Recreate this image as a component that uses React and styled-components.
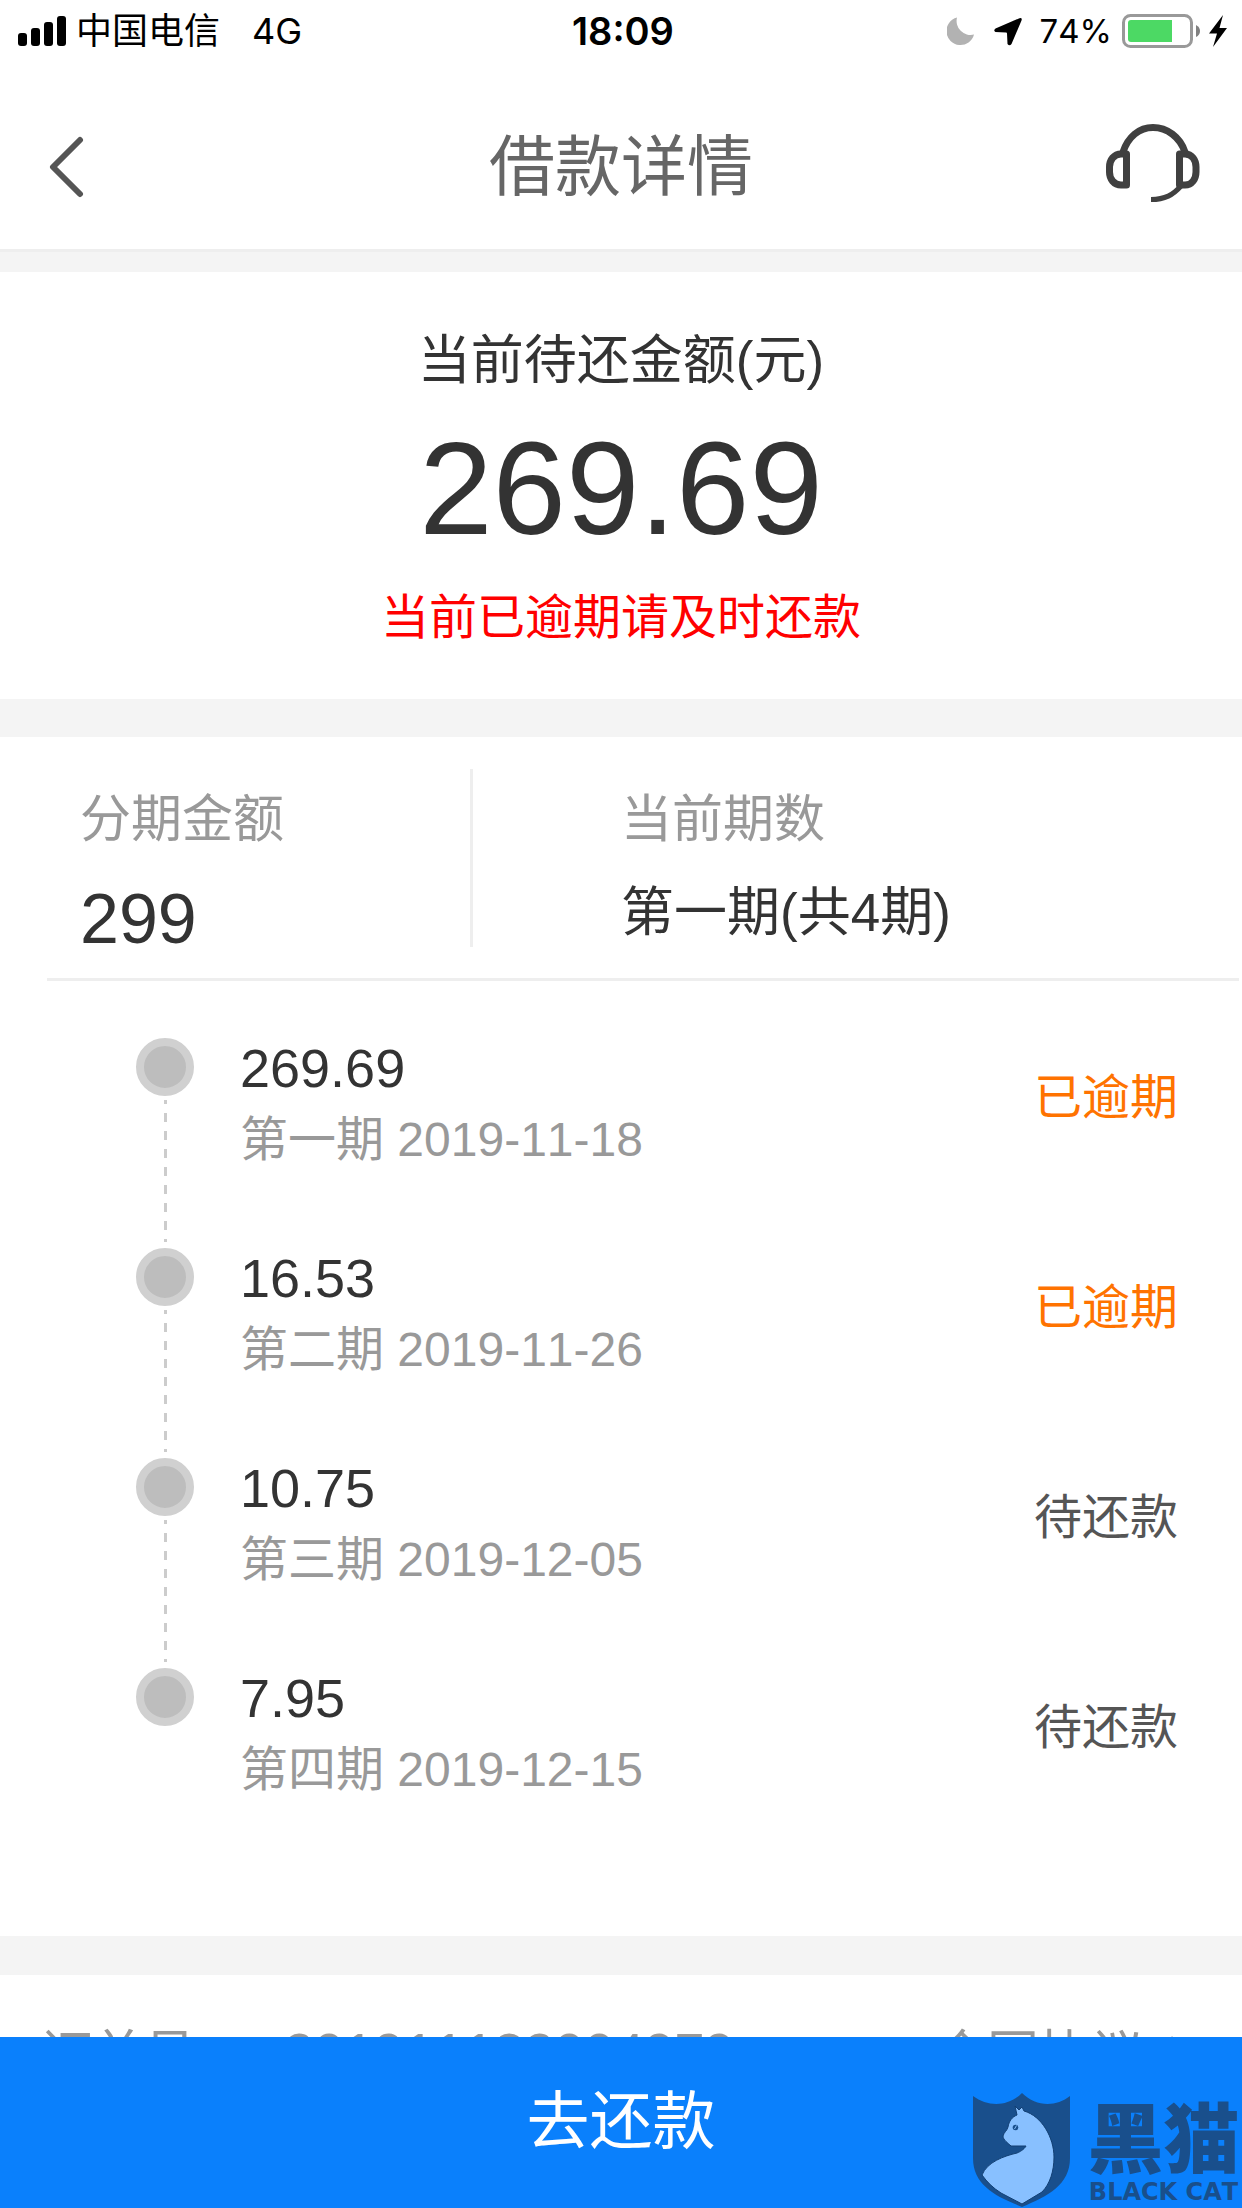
import React from 'react';
import styled, { createGlobalStyle } from 'styled-components';


const GlobalStyle = createGlobalStyle`
    * {
        box-sizing: border-box;
    }
    body {
        margin: 0;
        background-color: white;
        font-family: "Liberation Sans", "Noto Sans CJK SC", sans-serif;
        font-kerning: none;
        color: #333;
    }
    h1, p, dl, dt, dd, ul {
        margin: 0;
        padding: 0;
        font-weight: 400;
    }
`;
const Screen = styled.div`
    height: 100vh;
    display: flex;
    flex-direction: column;
`;

const StatusBar = styled.div`
    display: grid;
    grid-template-columns: 1fr auto 1fr;
    align-items: center;
    height: 60px;
    padding: 2px 14px 0 18px;
    font-family: Inter, "Noto Sans CJK SC", sans-serif;
    font-size: 36px;
    line-height: 48px;
    color: black;
    flex-shrink: 0;
`;
const StatusSide = styled.div`
    display: flex;
    align-items: center;
    gap: 10px;
    justify-content: ${props => props.$end ? 'flex-end' : 'flex-start'};
`;
const Network = styled.span`
    margin-left: 22px;
`;
const Time = styled.span`
    font-size: 38px;
    font-weight: 600;
`;
const Level = styled.span`
    margin-left: 8px;
    font-size: 33px;
`;

const Header = styled.header`
    display: flex;
    align-items: center;
    justify-content: space-between;
    height: 192px;
    padding: 24px 42px 0;
    border-bottom: 3px solid #eee;
    flex-shrink: 0;
`;
const IconButton = styled.button`
    display: flex;
    justify-content: ${props => props.$end ? 'flex-end' : 'flex-start'};
    width: 96px;
    padding: 0 0 0 ${props => props.$end ? 0 : 6}px;
    border: none;
    background: none;
    cursor: pointer;
`;
const Title = styled.h1`
    font-size: 66px;
    line-height: 84px;
    color: #666;
`;

const Content = styled.main`
    flex: 1;
    min-height: 0;
    overflow-y: auto;
    scrollbar-width: none;
`;
const Gap = styled.div`
    height: ${props => props.$size}px;
    background-color: #f4f4f4;
`;

const Amount = styled.section`
    display: flex;
    flex-direction: column;
    align-items: center;
    padding: 53px 0 51px;
`;
const AmountLabel = styled.p`
    font-size: 53px;
    line-height: 72px;
`;
const AmountValue = styled.p`
    font-size: 132px;
    line-height: 132px;
    margin: 26px 0 33px;
`;
const Warning = styled.p`
    font-size: 48px;
    line-height: 60px;
    color: #ff0000;
`;

const Summary = styled.dl`
    display: grid;
    grid-template-columns: 423px 3px 1fr;
    margin: 0 3px 0 47px;
    border-bottom: 3px solid #eee;
`;
const Cell = styled.div`
    padding: 53px 0 23px ${props => props.$indent}px;
`;
const Divider = styled.div`
    margin: 32px 0 31px;
    background-color: #eee;
`;
const CellLabel = styled.dt`
    font-size: 51px;
    line-height: 60px;
    color: #999;
    margin-bottom: 33px;
`;
const CellValue = styled.dd`
    font-size: ${props => props.$large ? 70 : 53}px;
    line-height: ${props => props.$large ? 72 : 60}px;
`;

const Timeline = styled.ul`
    list-style: none;
    padding: 57px 64px 58px 136px;
`;
const Item = styled.li`
    display: flex;
    gap: 46px;
    height: 210px;
`;
const Marker = styled.div`
    display: flex;
    flex-direction: column;
    align-items: center;
    gap: 4px;
    width: 58px;
`;
const Dot = styled.span`
    width: 58px;
    height: 58px;
    border: 8px solid #d0d0d0;
    border-radius: 50%;
    background-color: #bdbdbd;
`;
const Dash = styled.span`
    width: 3px;
    height: 142px;
    background: repeating-linear-gradient(#ccc 0 4px, transparent 4px 13px, #ccc 13px 18px);
`;
const Info = styled.div`
    flex: 1;
`;
const Price = styled.p`
    font-size: 54px;
    line-height: 60px;
    margin-bottom: 12px;
`;
const DueDate = styled.p`
    font-size: 48px;
    line-height: 60px;
    color: #999;
`;
const State = styled.span`
    margin-top: 30px;
    font-size: 48px;
    line-height: 60px;
    color: ${props => props.$overdue ? '#ff7300' : '#555'};
`;

const Order = styled.section`
    display: flex;
    padding: 50px 58px 50px 40px;
    font-size: 52px;
    line-height: 60px;
    color: #999;
`;
const OrderNo = styled.span`
    flex: 1;
    margin-left: 88px;
    font-size: 54px;
    line-height: 54px;
`;
const Contract = styled.a`
    display: flex;
    align-items: center;
    gap: 26px;
    color: inherit;
    text-decoration: none;
`;

const Footer = styled.footer`
    position: relative;
    flex-shrink: 0;
`;
const PayButton = styled.button`
    display: block;
    width: 100%;
    height: 171px;
    padding: 0 0 14px;
    border: none;
    background-color: #0a80fc;
    color: white;
    font-family: inherit;
    font-size: 63px;
    cursor: pointer;
`;
const Watermark = styled.div`
    position: absolute;
    right: 0;
    bottom: 0;
    display: flex;
    align-items: flex-end;
    color: #194f8c;
    pointer-events: none;
`;
const Brand = styled.div`
    display: flex;
    flex-direction: column;
    align-items: center;
    width: 157px;
    padding-bottom: 2px;
`;
const BrandName = styled.span`
    font-family: "Noto Sans CJK SC", sans-serif;
    font-size: 76px;
    font-weight: 900;
    line-height: 88px;
`;
const BrandLatin = styled.span`
    font-family: "DejaVu Sans", sans-serif;
    font-size: 24px;
    font-weight: 700;
    line-height: 28px;
    white-space: nowrap;
`;

const Signal = () => (
    <svg width="48" height="30" viewBox="0 0 48 30">
        <rect x="0" y="17" width="9" height="13" rx="3" />
        <rect x="13" y="12" width="9" height="18" rx="3" />
        <rect x="26" y="6" width="9" height="24" rx="3" />
        <rect x="39" y="0" width="9" height="30" rx="3" />
    </svg>
);

const StatusIcons = () => (
    <svg width="75" height="30" viewBox="0 0 75 30">
        <path d="M10 1.500A14 14 0 1 0 27 18.500A14 14 0 0 1 10 1.500Z" fill="#b2b2b2" />
        <path d="M72.500 2.200Q75.500 1.500 74.500 4.500L64.500 28Q62.500 30.500 60.500 28L60 17.500Q60 16.500 59 16.500L48.500 16Q46 14.500 48.500 12.500Z" />
    </svg>
);

const Battery = () => (
    <svg width="106" height="34" viewBox="0 0 106 34">
        <rect x="1.500" y="1.500" width="68" height="31" rx="7" fill="white" stroke="#999" strokeWidth="3" />
        <path d="M50 6H9Q6 6 6 9V25Q6 28 9 28H50Z" fill="#4cd964" />
        <path d="M74 11Q78 13 78 17Q78 21 74 23Z" fill="#808080" />
        <path d="M101 1L87 19.500H95L91 33L105 14H97.500Z" />
    </svg>
);

const Back = () => (
    <svg width="36" height="62" viewBox="0 0 36 62" fill="none" stroke="#555" strokeWidth="6" strokeLinecap="round" strokeLinejoin="round">
        <path d="M32 4L5 31L32 58" />
    </svg>
);

const Headset = () => (
    <svg width="94" height="86" viewBox="0 0 94 86" fill="none" stroke="#404040" strokeWidth="7">
        <path d="M17 28C22 13 33 3.500 47 3.500S74 13 79 28" />
        <path d="M20.500 30V61H15C8 61 3.500 55 3.500 48V43C3.500 36 8 30 15 30Z" strokeLinejoin="round" />
        <path d="M73.500 30V61H79C86 61 90 55 90 48V43C90 36 86 30 79 30Z" strokeLinejoin="round" />
        <path d="M75 62C67 71 59 75.500 45 75.500" strokeWidth="5" />
    </svg>
);

const Shield = () => (
    <svg width="120" height="123" viewBox="0 0 120 123">
        <path d="M8 11C23 22 43 22 57 8C71 22 91 22 105 11V73C105 100 83 111 57 122C30 111 8 100 8 73Z" fill="#194f8c" />
        <path d="M50 21L54 25L57 22L59 26C77 31 89 53 89 72C89 86 85 99 77 107L57 119L36 108C28 103 22 97 17 90C22 77 39 71 52 68C57 66 60 63 61 61H46C43 58 38 55 38 51C39 47 42 46 43 42C44 36 47 32 52 30Z" fill="#88c0ff" stroke="#123f73" strokeWidth="1" />
        <circle cx="50.500" cy="42.500" r="2.800" fill="#194f8c" />
        <path d="M49.500 44L51.500 40.500" stroke="#88c0ff" strokeWidth="1" />
    </svg>
);

const plans = [
    { amount: '269.69', term: '第一期', date: '2019-11-18', overdue: true },
    { amount: '16.53', term: '第二期', date: '2019-11-26', overdue: true },
    { amount: '10.75', term: '第三期', date: '2019-12-05', overdue: false },
    { amount: '7.95', term: '第四期', date: '2019-12-15', overdue: false },
];

const App = () => {
  return (
    <Screen>
        <GlobalStyle />
        <StatusBar>
            <StatusSide>
                <Signal />
                <span>中国电信</span>
                <Network>4G</Network>
            </StatusSide>
            <Time>18:09</Time>
            <StatusSide $end>
                <StatusIcons />
                <Level>74%</Level>
                <Battery />
            </StatusSide>
        </StatusBar>
        <Header>
            <IconButton aria-label="返回"><Back /></IconButton>
            <Title>借款详情</Title>
            <IconButton aria-label="客服" $end><Headset /></IconButton>
        </Header>
        <Content>
            <Gap $size={20} />
            <Amount>
                <AmountLabel>当前待还金额(元)</AmountLabel>
                <AmountValue>269.69</AmountValue>
                <Warning>当前已逾期请及时还款</Warning>
            </Amount>
            <Gap $size={38} />
            <Summary>
                <Cell $indent={33}>
                    <CellLabel>分期金额</CellLabel>
                    <CellValue $large>299</CellValue>
                </Cell>
                <Divider />
                <Cell $indent={148}>
                    <CellLabel>当前期数</CellLabel>
                    <CellValue>第一期(共4期)</CellValue>
                </Cell>
            </Summary>
            <Timeline>
                {plans.map((plan, index) => (
                    <Item key={plan.date}>
                        <Marker>
                            <Dot />
                            {index < plans.length - 1 && <Dash />}
                        </Marker>
                        <Info>
                            <Price>{plan.amount}</Price>
                            <DueDate>{plan.term} {plan.date}</DueDate>
                        </Info>
                        <State $overdue={plan.overdue}>{plan.overdue ? '已逾期' : '待还款'}</State>
                    </Item>
                ))}
            </Timeline>
            <Gap $size={39} />
            <Order>
                <span>订单号</span>
                <OrderNo>201911182004979</OrderNo>
                <Contract href="#contract">
                    合同协议
                    <svg width="15" height="38" viewBox="0 0 15 38" fill="none" stroke="#999" strokeWidth="3">
                        <path d="M2 1L13 19L2 37" />
                    </svg>
                </Contract>
            </Order>
        </Content>
        <Footer>
            <PayButton>去还款</PayButton>
            <Watermark>
                <Shield />
                <Brand>
                    <BrandName>黑猫</BrandName>
                    <BrandLatin>BLACK CAT</BrandLatin>
                </Brand>
            </Watermark>
        </Footer>
    </Screen>
  )
}

export default App
